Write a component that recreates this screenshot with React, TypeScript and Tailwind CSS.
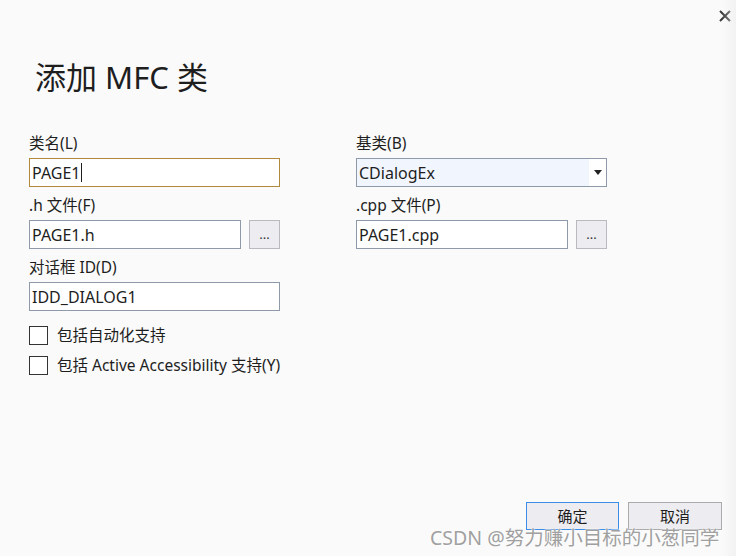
import React from 'react';

const font = { fontFamily: '"Noto Sans", "Noto Sans CJK SC", sans-serif' };

const Field: React.FC<{ label: string; value: string; focused?: boolean; browse?: boolean; className?: string }> = ({
  label,
  value,
  focused,
  browse,
  className = '',
}) => (
  <div className={className}>
    <div className="h-[20px] text-[15.5px] leading-[20px] text-[#1e1e1e]">{label}</div>
    <div className="mt-[5px] flex gap-[8px]">
      <div
        className={`flex h-[29px] items-center border px-[2px] text-[16px] text-[#1e1e1e] bg-white ${
          browse ? 'w-[212px]' : 'w-[251px]'
        } ${focused ? 'border-[#b1883e]' : 'border-[#8e99aa]'}`}
      >
        {value}
        {focused && <span className="ml-[1px] inline-block h-[19px] w-[1px] bg-[#1e1e1e]" />}
      </div>
      {browse && (
        <div className="flex h-[29px] w-[31px] items-center justify-center border border-[#b9b9c0] bg-[#ededf1] text-[13px] text-[#333]">
          ...
        </div>
      )}
    </div>
  </div>
);

export default function App() {
  return (
    <div className="relative flex h-[556px] w-[736px] flex-col overflow-hidden bg-[#fafafa]" style={font}>
      <div className="flex justify-end pr-[3px] pt-[9px]">
        <svg width="14" height="14" viewBox="0 0 14 14" className="mr-[1px]">
          <path d="M2 2L12 12M12 2L2 12" stroke="#3a3a3a" strokeWidth="2" />
        </svg>
      </div>

      <h1 className="ml-[35px] mt-[34px] text-[31px] leading-[40px] text-[#1e1e1e]">添加 MFC 类</h1>

      <div className="ml-[29px] mt-[36px] flex gap-[76px]">
        <div className="flex w-[251px] flex-col">
          <Field label="类名(L)" value="PAGE1" focused />
          <Field className="mt-[8px]" label=".h 文件(F)" value="PAGE1.h" browse />
          <Field className="mt-[8px]" label="对话框 ID(D)" value="IDD_DIALOG1" />

          <div className="mt-[15px] flex flex-col gap-[11px]">
            <label className="flex h-[19px] items-center gap-[9px] text-[15.5px] leading-[19px] text-[#1e1e1e]">
              <span className="h-[19px] w-[19px] shrink-0 border border-[#333] bg-white" />
              包括自动化支持
            </label>
            <label className="flex h-[19px] items-center gap-[9px] whitespace-nowrap text-[15.5px] leading-[19px] text-[#1e1e1e]">
              <span className="h-[19px] w-[19px] shrink-0 border border-[#333] bg-white" />
              包括 Active Accessibility 支持(Y)
            </label>
          </div>
        </div>

        <div className="flex w-[251px] flex-col">
          <div>
            <div className="h-[20px] text-[15.5px] leading-[20px] text-[#1e1e1e]">基类(B)</div>
            <div className="mt-[5px] flex h-[29px] w-[251px] border border-[#8e99aa] bg-white">
              <div className="flex flex-1 items-center bg-[#f1f5fd] px-[2px] text-[16px] text-[#1e1e1e]">CDialogEx</div>
              <div className="flex w-[17px] items-center justify-center">
                <svg width="8" height="5" viewBox="0 0 8 5">
                  <path d="M0 0H8L4 5Z" fill="#222" />
                </svg>
              </div>
            </div>
          </div>
          <Field className="mt-[8px]" label=".cpp 文件(P)" value="PAGE1.cpp" browse />
        </div>
      </div>

      <div className="mt-auto flex justify-end gap-[9px] pb-[26px] pr-[14px]">
        <button className="h-[28px] w-[93px] border border-[#3a8ee6] bg-[#edecf1] text-[15px] text-[#1e1e1e]">确定</button>
        <button className="h-[28px] w-[94px] border border-[#ababab] bg-[#edecf1] text-[15px] text-[#1e1e1e]">取消</button>
      </div>

      <div className="pointer-events-none absolute right-0 top-0 h-full w-[14px] bg-gradient-to-r from-transparent to-[#ededed]/60" />

      <div
        className="pointer-events-none absolute bottom-[7px] left-[430px] whitespace-nowrap text-[19.5px] leading-[22px] text-[#a0a0a0]"
        style={{ textShadow: '0 0 2px #fff, 0 0 2px #fff' }}
      >
        CSDN @努力赚小目标的小葱同学
      </div>
    </div>
  );
}
